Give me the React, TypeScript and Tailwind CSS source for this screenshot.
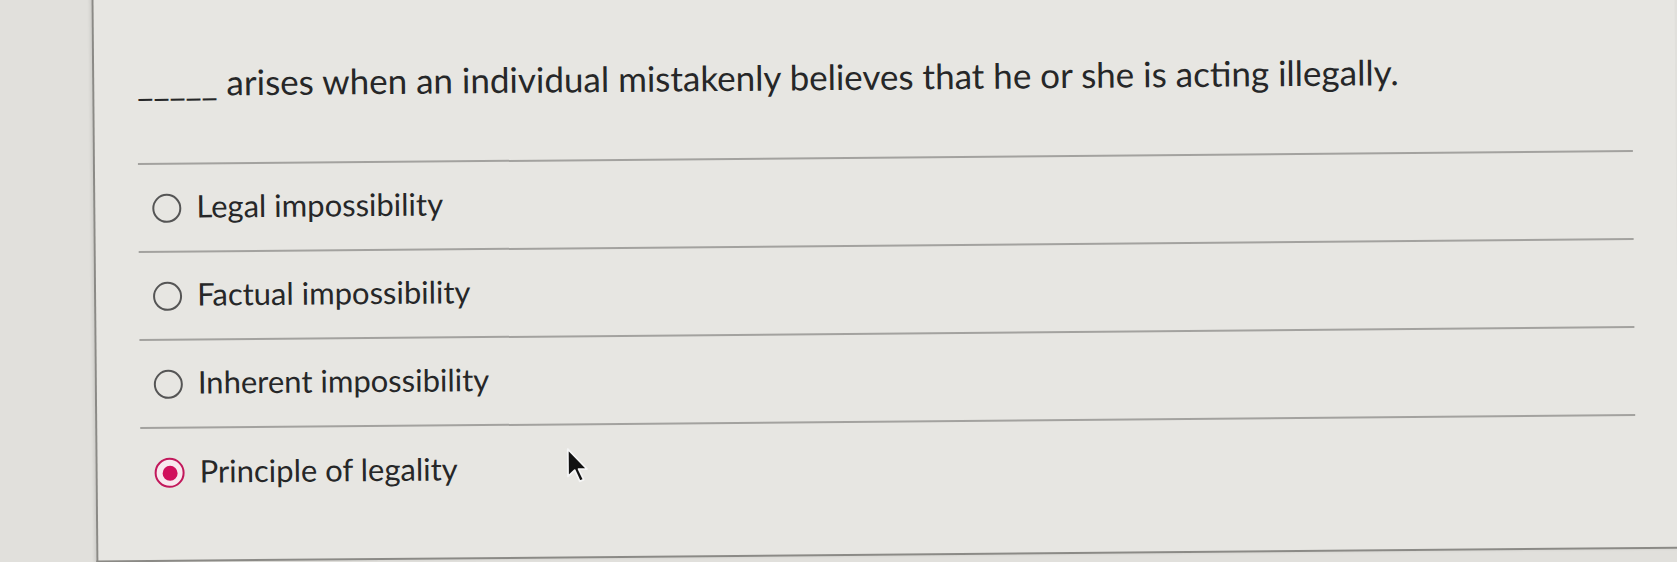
import React from 'react';

const options = [
  { label: 'Legal impossibility', selected: false },
  { label: 'Factual impossibility', selected: false },
  { label: 'Inherent impossibility', selected: false },
  { label: 'Principle of legality', selected: true },
];

function Radio({ selected }: { selected: boolean }) {
  if (selected) {
    return (
      <span className="w-[30px] h-[30px] shrink-0 rounded-full border-2 border-[#c2185b] bg-[#f8e8ee] flex items-center justify-center">
        <span className="w-[15px] h-[15px] rounded-full bg-[#d10f5c]" />
      </span>
    );
  }
  return <span className="w-[29px] h-[29px] shrink-0 rounded-full border-2 border-[#555555]" />;
}

function Cursor() {
  return (
    <svg className="absolute left-[564px] top-[475px]" width="26" height="38" viewBox="0 0 22 34">
      <path
        d="M1.5 1.5 L1.5 26 L7.5 20.5 L12 30.5 L15.5 29 L11 19.5 L18.5 19.5 Z"
        fill="#111"
        stroke="#f5f5f5"
        strokeWidth="1.6"
        strokeLinejoin="round"
      />
    </svg>
  );
}

export default function App() {
  return (
    <div
      className="w-[1677px] h-[562px] overflow-hidden bg-[#e1e0dc]"
      style={{ fontFamily: 'Lato, "Open Sans", sans-serif' }}
    >
      <div className="relative -mt-[30px] w-[1677px] h-[630px] rotate-[-0.5deg] flex items-start">
        <div className="w-[94px] shrink-0" />
        <div className="flex-1 h-[586px] pt-[82px] px-[43px] border-l-2 border-b-2 border-[#8b8a86] bg-[#e7e6e2] shadow-[-2px_0_3px_rgba(0,0,0,0.08)]">
          <div className="pb-[57px] border-b-2 border-[#a3a29f] text-[35px] leading-[48px] text-[#262728]">
            _____ arises when an individual mistakenly believes that he or she is acting illegally.
          </div>
          {options.map((o, i) => (
            <div
              key={o.label}
              className={
                'h-[88px] pl-[14px] flex items-center gap-[15px] ' +
                (i < options.length - 1 ? 'border-b-2 border-[#a3a29f]' : '')
              }
            >
              <Radio selected={o.selected} />
              <span className="-mt-[4px] text-[31px] leading-[40px] text-[#262728]">{o.label}</span>
            </div>
          ))}
        </div>
        <Cursor />
      </div>
    </div>
  );
}
